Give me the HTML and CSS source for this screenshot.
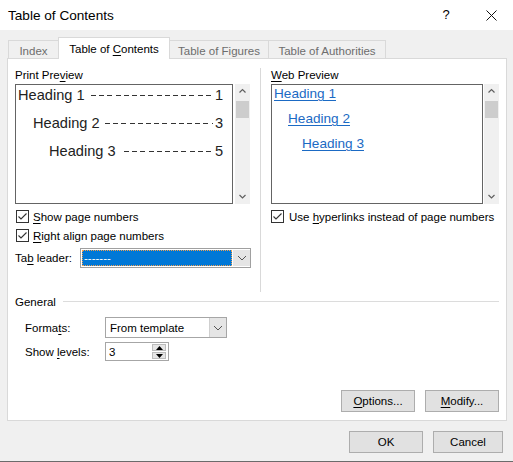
FILE: index.html
```html
<!DOCTYPE html>
<html>
<head>
<meta charset="utf-8">
<title>Table of Contents</title>
<link rel="stylesheet" href="styles.css">
</head>
<body>
<div class="window">
  <div class="titlebar">
    <span class="title">Table of Contents</span>
    <span class="help">?</span>
    <svg class="close" width="11" height="11" viewBox="0 0 11 11"><path d="M0.5 0.5 L10.5 10.5 M10.5 0.5 L0.5 10.5" stroke="#111" stroke-width="1" fill="none"/></svg>
  </div>

  <div class="tabs">
    <div class="tab tab-index"><span>Index</span></div>
    <div class="tab tab-toc active"><span>Table of <u>C</u>ontents</span></div>
    <div class="tab tab-fig"><span>Table of Figures</span></div>
    <div class="tab tab-auth"><span>Table of Authorities</span></div>
  </div>

  <div class="panel">
    <div class="top">
      <div class="col col-left">
        <div class="label">Print Pre<u>v</u>iew</div>
        <div class="preview-row">
          <div class="print-box">
            <div class="pline lvl1"><span>Heading 1</span><span class="leader"></span><span>1</span></div>
            <div class="pline lvl2"><span>Heading 2</span><span class="leader"></span><span>3</span></div>
            <div class="pline lvl3"><span>Heading 3</span><span class="leader"></span><span>5</span></div>
          </div>
          <div class="scrollbar">
            <svg class="arrow" width="15" height="15" viewBox="0 0 15 15"><path d="M4.5 8.5 L7.5 5.5 L10.5 8.5" stroke="#606060" stroke-width="1.2" fill="none"/></svg>
            <div class="thumb"></div>
            <div class="track"></div>
            <svg class="arrow" width="15" height="15" viewBox="0 0 15 15"><path d="M4.5 6 L7.5 9 L10.5 6" stroke="#606060" stroke-width="1.2" fill="none"/></svg>
          </div>
        </div>
        <div class="check-row first">
          <span class="checkbox"><svg width="11" height="11" viewBox="0 0 11 11"><path d="M1.5 5.5 L4 8 L9.5 2.5" stroke="#333" stroke-width="1.1" fill="none"/></svg></span>
          <span><u>S</u>how page numbers</span>
        </div>
        <div class="check-row">
          <span class="checkbox"><svg width="11" height="11" viewBox="0 0 11 11"><path d="M1.5 5.5 L4 8 L9.5 2.5" stroke="#333" stroke-width="1.1" fill="none"/></svg></span>
          <span><u>R</u>ight align page numbers</span>
        </div>
        <div class="leader-row">
          <span class="leader-label">Ta<u>b</u> leader:</span>
          <div class="select select-leader">
            <div class="sel-value highlighted"><span>-------</span></div>
            <div class="sel-btn"><svg width="10" height="6" viewBox="0 0 10 6"><path d="M1 1 L5 5 L9 1" stroke="#555" stroke-width="1" fill="none"/></svg></div>
          </div>
        </div>
      </div>
      <div class="vsep"></div>
      <div class="col col-right">
        <div class="label"><u>W</u>eb Preview</div>
        <div class="preview-row">
          <div class="web-box">
            <a class="wline lvl1">Heading 1</a>
            <a class="wline lvl2">Heading 2</a>
            <a class="wline lvl3">Heading 3</a>
          </div>
          <div class="scrollbar web-scroll">
            <svg class="arrow" width="15" height="15" viewBox="0 0 15 15"><path d="M4.5 8.5 L7.5 5.5 L10.5 8.5" stroke="#606060" stroke-width="1.2" fill="none"/></svg>
            <div class="thumb"></div>
            <div class="track"></div>
            <svg class="arrow" width="15" height="15" viewBox="0 0 15 15"><path d="M4.5 6 L7.5 9 L10.5 6" stroke="#606060" stroke-width="1.2" fill="none"/></svg>
          </div>
        </div>
        <div class="check-row first right">
          <span class="checkbox"><svg width="11" height="11" viewBox="0 0 11 11"><path d="M1.5 5.5 L4 8 L9.5 2.5" stroke="#333" stroke-width="1.1" fill="none"/></svg></span>
          <span>Use <u>h</u>yperlinks instead of page numbers</span>
        </div>
      </div>
    </div>

    <div class="general">
      <div class="group-head"><span>General</span><span class="group-line"></span></div>
      <div class="form-row formats">
        <span class="form-label">Forma<u>t</u>s:</span>
        <div class="select select-formats">
          <div class="sel-value"><span>From template</span></div>
          <div class="sel-btn"><svg width="10" height="6" viewBox="0 0 10 6"><path d="M1 1 L5 5 L9 1" stroke="#555" stroke-width="1" fill="none"/></svg></div>
        </div>
      </div>
      <div class="form-row levels">
        <span class="form-label">Show <u>l</u>evels:</span>
        <div class="spin">
          <span class="spin-value">3</span>
          <div class="spin-btns">
            <div class="spin-btn"><svg width="7" height="4" viewBox="0 0 7 4"><path d="M0 4 L3.5 0 L7 4 Z" fill="#000"/></svg></div>
            <div class="spin-btn"><svg width="7" height="4" viewBox="0 0 7 4"><path d="M0 0 L3.5 4 L7 0 Z" fill="#000"/></svg></div>
          </div>
        </div>
      </div>
    </div>

    <div class="panel-buttons">
      <div class="btn"><span><u>O</u>ptions...</span></div>
      <div class="btn"><span><u>M</u>odify...</span></div>
    </div>
  </div>

  <div class="footer">
    <div class="btn btn-ok">OK</div>
    <div class="btn btn-cancel">Cancel</div>
  </div>
</div>
</body>
</html>
```

FILE: styles.css
```css
* { box-sizing: border-box; }
html, body { margin: 0; padding: 0; }
body {
  width: 513px;
  height: 462px;
  overflow: hidden;
  background: #f0f0f0;
  font-family: "Liberation Sans", Arial, sans-serif;
  font-size: 11.5px;
  color: #000;
}
u { text-decoration-thickness: 1px; text-underline-offset: 2px; }

.window {
  height: 462px;
  display: flex;
  flex-direction: column;
  border-bottom: 1px solid #6b6b6b;
}

.titlebar {
  height: 30px;
  background: #fff;
  display: flex;
  align-items: center;
  padding-left: 8px;
  padding-right: 16px;
  flex: none;
}
.title { flex: 1; font-size: 13.6px; color: #000; }
.help { width: 10px; text-align: center; font-size: 13px; margin-right: 35px; margin-top: -2px; }
.close { display: block; }

.tabs {
  margin-top: 7px;
  padding-left: 8px;
  height: 21px;
  display: flex;
  align-items: flex-end;
  flex: none;
}
.tab {
  height: 18px;
  border: 1px solid #d9d9d9;
  border-bottom: none;
  border-right: none;
  background: #f0f0f0;
  color: #6d6d6d;
  display: flex;
  align-items: center;
  justify-content: center;
  padding-top: 2px;
}
.tab-auth { border-right: 1px solid #d9d9d9; }
.tab-index { width: 50px; }
.tab-toc { width: 112px; }
.tab-fig { width: 98px; }
.tab-auth { width: 118px; }
.tab.active {
  height: 22px;
  margin-bottom: -1px;
  background: #fff;
  color: #000;
  border-right: 1px solid #d9d9d9;
  position: relative;
  z-index: 1;
  padding-top: 0;
}
.tab.active + .tab { border-left: none; }

.panel {
  margin-left: 7px;
  width: 500px;
  height: 363px;
  border: 1px solid #d9d9d9;
  background: #fff;
  display: flex;
  flex-direction: column;
  padding: 9px 7px 8px 7px;
  flex: none;
}

.top { display: flex; height: 224px; }
.col-left { width: 236px; }
.vsep { width: 1px; margin-left: 9px; background: #d9d9d9; }
.col-right { width: 228px; margin-left: 10px; }

.label { height: 14px; line-height: 14px; margin-bottom: 2px; color: #000; }

.preview-row { display: flex; height: 120px; }
.print-box {
  width: 218px;
  height: 120px;
  border: 1px solid #646464;
  padding: 0 9px 0 2px;
  display: flex;
  flex-direction: column;
  gap: 8px;
  font-size: 14.6px;
  color: #222;
}
.pline { display: flex; align-items: center; height: 20px; line-height: 20px; }
.pline.lvl2 { padding-left: 15px; }
.pline.lvl3 { padding-left: 31px; }
.leader {
  flex: 1;
  height: 1px;
  margin: 1px 2px 0 6px;
  background: repeating-linear-gradient(to right, #333 0 5px, transparent 5px 8.2px);
}
.pline.lvl2 .leader { margin-left: 5px; }
.pline.lvl3 .leader { margin-left: 8px; }

.scrollbar {
  width: 15px;
  margin-left: 2px;
  background: #f0f0f0;
  display: flex;
  flex-direction: column;
}
.web-scroll { margin-left: 1px; }
.arrow { display: block; flex: none; }
.thumb { height: 17px; margin: 2px 1px 0 1px; background: #cdcdcd; flex: none; }
.track { flex: 1; }

.web-box {
  width: 212px;
  height: 120px;
  border: 1px solid #646464;
  padding: 0 2px;
  display: flex;
  flex-direction: column;
  align-items: flex-start;
  gap: 7px;
  font-size: 13.6px;
}
.wline {
  height: 18px;
  line-height: 18px;
  color: #1b6ac4;
  text-decoration: underline;
  text-decoration-thickness: 1px;
  text-underline-offset: 2px;
}
.wline.lvl2 { margin-left: 14px; }
.wline.lvl3 { margin-left: 28px; }

.check-row { display: flex; align-items: center; height: 19px; }
.check-row.first { margin-top: 3px; }
.checkbox {
  width: 13px;
  height: 13px;
  border: 1px solid #333;
  background: #fff;
  margin-left: 1px;
  margin-right: 4px;
  display: flex;
  align-items: center;
  justify-content: center;
}
.check-row.right .checkbox { margin-left: 0; margin-right: 5px; }

.leader-row { display: flex; align-items: center; margin-top: 3px; height: 20px; }
.leader-label { width: 65px; }

.select {
  display: flex;
  border: 1px solid #a6a6a6;
  background: #fff;
}
.select-leader { width: 171px; height: 20px; padding: 1px 0 1px 1px; border-color: #a0a0a0; }
.sel-value { flex: 1; display: flex; align-items: center; padding-left: 4px; }
.sel-value.highlighted {
  background: #0078d7;
  color: #fff;
  outline: 1px dotted #f0a050;
  outline-offset: -1px;
  padding-left: 2px;
}
.sel-btn {
  width: 17px;
  background: #e5e5e5;
  border-left: 1px solid #fff;
  display: flex;
  align-items: center;
  justify-content: center;
}
.select-leader .sel-btn { margin-left: 1px; border-left: none; }

.general { margin-top: 3px; }
.group-head { display: flex; align-items: center; height: 14px; line-height: 14px; }
.group-line { flex: 1; height: 1px; background: #dcdcdc; margin-left: 7px; margin-top: -1px; }

.form-row { display: flex; align-items: center; padding-left: 10px; }
.form-label { width: 80px; }
.formats { margin-top: 8px; height: 21px; }
.select-formats { width: 122px; height: 21px; }
.select-formats .sel-btn { border-left: 1px solid #cfcfcf; }
.levels { margin-top: 4px; height: 19px; }
.spin {
  width: 64px;
  height: 19px;
  border: 1px solid #a6a6a6;
  background: #fff;
  display: flex;
  align-items: center;
  padding: 1px 2px 1px 3px;
}
.spin-value { flex: 1; }
.spin-btns { width: 14px; height: 100%; display: flex; flex-direction: column; gap: 1px; }
.spin-btn {
  flex: 1;
  background: #e5e5e5;
  border: 1px solid #bcbcbc;
  display: flex;
  align-items: center;
  justify-content: center;
}

.panel-buttons {
  margin-top: auto;
  display: flex;
  justify-content: flex-end;
  gap: 10px;
}
.btn {
  width: 74px;
  height: 22px;
  background: #e1e1e1;
  border: 1px solid #adadad;
  display: flex;
  align-items: center;
  justify-content: center;
}

.footer {
  margin-top: 10px;
  display: flex;
  justify-content: flex-end;
  gap: 10px;
  padding-right: 10px;
}
.btn-cancel { width: 70px; }
```
